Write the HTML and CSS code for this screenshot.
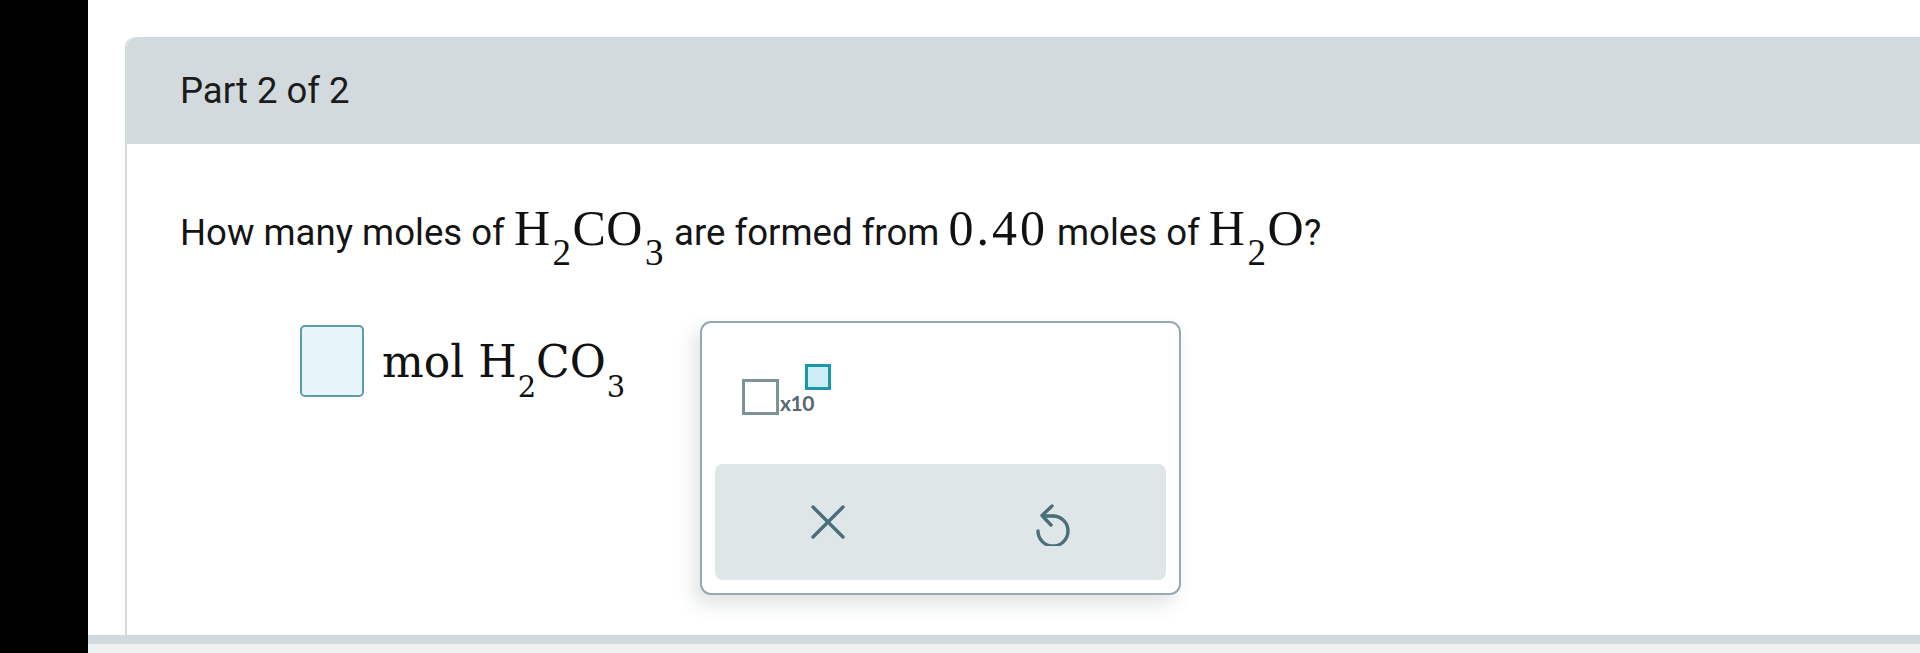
FILE: index.html
```html
<!DOCTYPE html>
<html>
<head>
<meta charset="utf-8">
<title>Part 2 of 2</title>
<link rel="stylesheet" href="styles.css">
</head>
<body>
<div class="page">
  <aside class="sidebar"></aside>
  <main class="main">
    <section class="card">
      <header class="card-head">Part 2 of 2</header>
      <div class="card-body">
        <p class="question">How many moles of <span class="math">H<sub>2</sub>CO<sub>3</sub></span> are formed from <span class="math num">0.40</span> moles of <span class="math">H<sub>2</sub>O</span>?</p>
        <div class="answer">
          <div class="input-box"></div>
          <div class="units">mol H<sub>2</sub>CO<sub>3</sub></div>
          <div class="palette">
            <div class="template-area">
              <div class="template">
                <span class="sq-base"></span>
                <span class="x10">x10</span>
                <span class="sq-sup"></span>
              </div>
            </div>
            <div class="actions">
              <div class="action">
                <svg class="icon" width="36" height="36" viewBox="0 0 36 36">
                  <path d="M3 3 L33 33 M33 3 L3 33" fill="none" stroke="#4a6e7a" stroke-width="3.4" stroke-linecap="round"/>
                </svg>
              </div>
              <div class="action">
                <svg class="icon" width="48" height="48" viewBox="0 0 48 48">
                  <path d="M24 18 A15 15 0 1 1 9 33" fill="none" stroke="#4a6e7a" stroke-width="3.4" stroke-linecap="round"/>
                  <path d="M24 18 L14 18 M23 8 L13 17.5 L22 27" fill="none" stroke="#4a6e7a" stroke-width="3.4" stroke-linecap="round" stroke-linejoin="round"/>
                </svg>
              </div>
            </div>
          </div>
        </div>
      </div>
    </section>
    <div class="footer-bar"></div>
  </main>
</div>
</body>
</html>
```

FILE: styles.css
```css
html, body {
  margin: 0;
  padding: 0;
  background: #ffffff;
}

.page {
  display: flex;
  width: 1920px;
  height: 653px;
  overflow: hidden;
}

.sidebar {
  width: 88px;
  flex: 0 0 88px;
  background: #000000;
}

.main {
  flex: 1;
  display: flex;
  flex-direction: column;
  background: #ffffff;
}

.card {
  margin-top: 37px;
  margin-left: 37px;
  height: 598px;
  border-left: 2px solid #d3dadd;
  border-top-left-radius: 10px;
  overflow: hidden;
  box-sizing: border-box;
}

.card-head {
  height: 107px;
  line-height: 107px;
  background: #d2dadd;
  padding-left: 53px;
  font-family: Roboto, "Liberation Sans", sans-serif;
  font-size: 36.5px;
  color: #1b1b1b;
  border-top-left-radius: 10px;
}

.card-body {
  padding-left: 53px;
}

.question {
  margin: 0;
  padding-top: 54px;
  font-family: Roboto, "Liberation Sans", sans-serif;
  font-size: 36.6px;
  line-height: 60px;
  color: #141414;
  white-space: nowrap;
}

.math {
  font-family: "Liberation Serif", "Times New Roman", serif;
  font-size: 50px;
  letter-spacing: 0.5px;
  color: #111111;
}

.math sub {
  font-size: 37px;
  line-height: 0;
  vertical-align: -20px;
  margin: 0 1px 0 2px;
}

.num {
  letter-spacing: 3px;
}

.answer {
  position: relative;
  display: flex;
  align-items: flex-start;
  margin-top: 62px;
  padding-left: 120px;
}

.input-box {
  width: 64px;
  height: 72px;
  box-sizing: border-box;
  border: 2.5px solid #5e9ca9;
  border-radius: 5px;
  background: #e6f5f9;
}

.units {
  margin-left: 18px;
  margin-top: 11px;
  font-family: "DejaVu Serif", "Liberation Serif", serif;
  font-size: 44px;
  line-height: 52px;
  color: #111111;
  white-space: nowrap;
}

.units sub {
  font-size: 29px;
  line-height: 0;
  vertical-align: -20px;
  margin-left: 1px;
}

.palette {
  position: absolute;
  left: 520px;
  top: -4px;
  width: 481px;
  height: 274px;
  box-sizing: border-box;
  border: 2px solid #97a9ae;
  border-radius: 11px;
  background: #ffffff;
  padding: 0 13px 13px 13px;
  box-shadow: -6px 9px 18px rgba(60, 85, 95, 0.16);
  display: flex;
  flex-direction: column;
}

.template-area {
  height: 141px;
  padding-top: 41px;
  padding-left: 27px;
  box-sizing: border-box;
}

.template {
  position: relative;
  display: flex;
  align-items: flex-start;
  width: 90px;
  height: 52px;
}

.sq-base {
  display: block;
  width: 37px;
  height: 36px;
  margin-top: 15px;
  box-sizing: border-box;
  border: 3px solid #7b9399;
}

.x10 {
  display: block;
  margin-left: 1px;
  margin-top: 29px;
  font-family: Lato, Roboto, "Liberation Sans", sans-serif;
  font-size: 21px;
  font-weight: 700;
  line-height: 20px;
  letter-spacing: -0.5px;
  color: #55686e;
}

.sq-sup {
  position: absolute;
  left: 63px;
  top: 0;
  width: 26px;
  height: 26px;
  box-sizing: border-box;
  border: 3px solid #1b97ad;
  background: #cdeef4;
}

.actions {
  flex: 1;
  display: flex;
  background: #dfe6e8;
  border-radius: 8px;
}

.action {
  flex: 1;
  display: flex;
  align-items: center;
  justify-content: center;
}

.icon {
  display: block;
}

.footer-bar {
  height: 18px;
  box-sizing: border-box;
  border-top: 9px solid #d2dadd;
  background: #eef2f3;
}
```
